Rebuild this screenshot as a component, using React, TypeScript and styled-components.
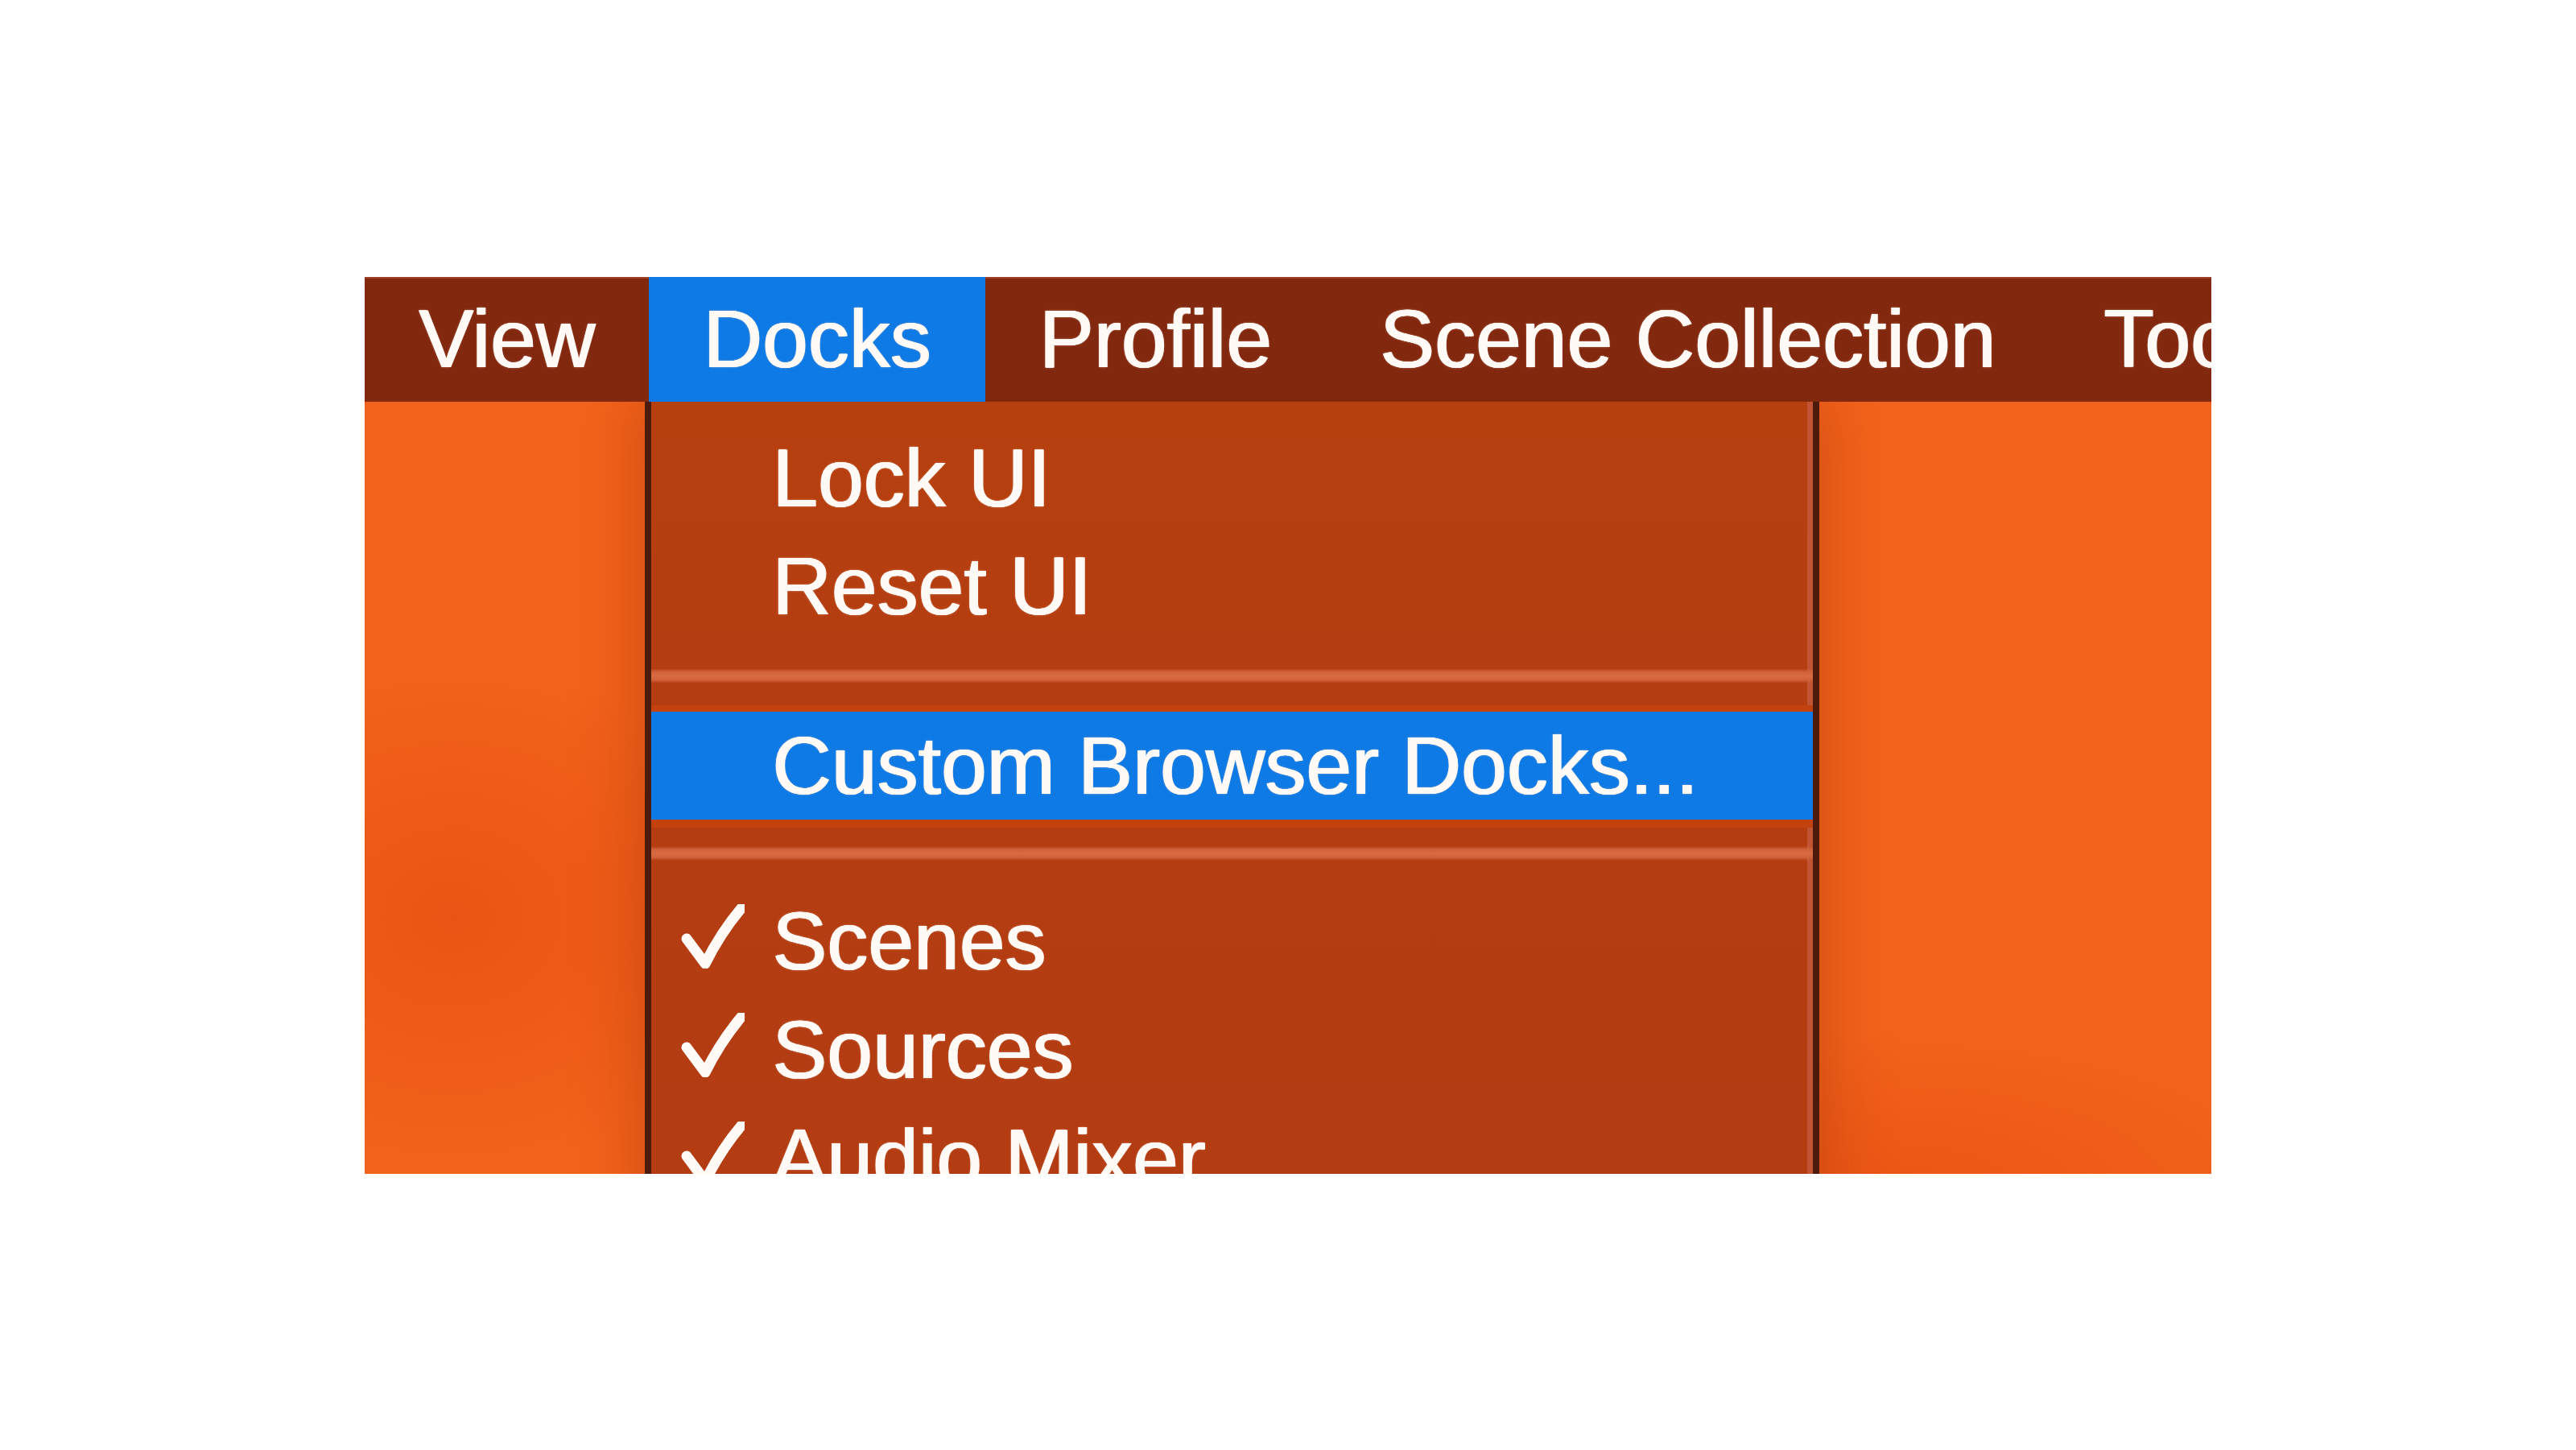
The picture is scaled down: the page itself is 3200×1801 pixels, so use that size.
import React from 'react';
import styled, { createGlobalStyle } from 'styled-components';

const GlobalStyle = createGlobalStyle`
  html, body {
    margin: 0;
    padding: 0;
    background: #ffffff;
  }
  body {
    font-family: "Liberation Sans", Arial, Helvetica, sans-serif;
  }
`;

// faux-weight: macOS Helvetica renders a touch heavier than Liberation Sans
const heavyText = `
  text-shadow:
    1.2px 0 0 #fffaf6,
    -0.6px 0 0 #fffaf6,
    0 0 3px rgba(255, 200, 180, 0.5);
`;

const Page = styled.div`
  width: 100vw;
  height: 100vh;
  display: flex;
  align-items: center;
  justify-content: center;
`;

const Frame = styled.div`
  width: 2294px;
  height: 1114px;
  overflow: hidden;
  display: flex;
  flex-direction: column;
`;

const MenuBar = styled.div`
  position: relative;
  z-index: 1;
  height: 155px;
  flex-shrink: 0;
  display: flex;
  background: #82280f;
  box-shadow: inset 0 2px 0 rgba(190, 90, 60, 0.5);
`;

const MenuTitle = styled.div<{ $active?: boolean }>`
  flex-shrink: 0;
  padding: 0 67px;
  line-height: 155px;
  font-size: 102px;
  color: #fffaf6;
  white-space: nowrap;
  background: ${({ $active }) => ($active ? '#0d7ae6' : 'transparent')};
  ${heavyText}
`;

const Desktop = styled.div`
  flex: 1;
  display: flex;
  align-items: flex-start;
  padding-left: 348px;
  background:
    radial-gradient(ellipse 380px 320px at 110px 640px, rgba(226, 72, 14, 0.55), transparent),
    radial-gradient(ellipse 520px 200px at 1900px 980px, rgba(226, 72, 14, 0.5), transparent),
    #f3631b;
`;

const Dropdown = styled.div`
  width: 1443px;
  flex-shrink: 0;
  padding-top: 28px;
  display: flex;
  flex-direction: column;
  background: linear-gradient(180deg, #b7400f 0%, #b43d12 40%, #b33c12 100%);
  border-left: 8px solid #4c1b0b;
  border-right: 8px solid #4c1b0b;
  box-shadow:
    inset -7px 0 0 #c25433,
    0 0 70px 10px rgba(150, 40, 5, 0.35);
`;

const Item = styled.div<{ $highlight?: boolean; $height?: number }>`
  height: ${({ $height }) => $height ?? 134}px;
  flex-shrink: 0;
  display: flex;
  align-items: center;
  font-size: 102px;
  line-height: 1;
  color: #fffaf6;
  white-space: nowrap;
  background: ${({ $highlight }) => ($highlight ? '#0d7ae6' : 'transparent')};
  box-shadow: ${({ $highlight }) =>
    $highlight ? '0 -8px 0 #c4420e, 0 10px 0 #c4420e' : 'none'};
  ${heavyText}
`;

const CheckSlot = styled.span`
  width: 150px;
  flex-shrink: 0;
  padding-left: 36px;
  box-sizing: border-box;
  display: flex;
  align-items: center;
  margin-bottom: 12px;
`;

const Separator = styled.div<{ $height: number }>`
  height: ${({ $height }) => $height}px;
  flex-shrink: 0;
  background: linear-gradient(
    180deg,
    transparent calc(50% - 9px),
    #d0613a calc(50% - 5px),
    #d96b43 50%,
    #d0613a calc(50% + 5px),
    transparent calc(50% + 9px)
  );
`;

const Check = () => (
  <svg width="80" height="80" viewBox="0 0 80 80">
    <path
      d="M8 43 L31 74 Q50 36 76 5"
      fill="none"
      stroke="#fffaf6"
      strokeWidth="13"
      strokeLinecap="round"
      strokeLinejoin="round"
    />
  </svg>
);

const menus = ['View', 'Docks', 'Profile', 'Scene Collection', 'Tools'];

type Entry =
  | { kind: 'item'; label: string; checked?: boolean; highlight?: boolean; height?: number }
  | { kind: 'sep'; height: number };

const entries: Entry[] = [
  { kind: 'item', label: 'Lock UI' },
  { kind: 'item', label: 'Reset UI' },
  { kind: 'sep', height: 89 },
  { kind: 'item', label: 'Custom Browser Docks...', highlight: true },
  { kind: 'sep', height: 84 },
  { kind: 'item', label: 'Scenes', checked: true, height: 135 },
  { kind: 'item', label: 'Sources', checked: true, height: 135 },
  { kind: 'item', label: 'Audio Mixer', checked: true, height: 135 },
];

export default function App() {
  return (
    <>
      <GlobalStyle />
      <Page>
        <Frame>
          <MenuBar>
            {menus.map((m) => (
              <MenuTitle key={m} $active={m === 'Docks'}>
                {m}
              </MenuTitle>
            ))}
          </MenuBar>
          <Desktop>
            <Dropdown>
              {entries.map((e, i) =>
                e.kind === 'sep' ? (
                  <Separator key={i} $height={e.height} />
                ) : (
                  <Item key={i} $highlight={e.highlight} $height={e.height}>
                    <CheckSlot>{e.checked && <Check />}</CheckSlot>
                    {e.label}
                  </Item>
                ),
              )}
            </Dropdown>
          </Desktop>
        </Frame>
      </Page>
    </>
  );
}
